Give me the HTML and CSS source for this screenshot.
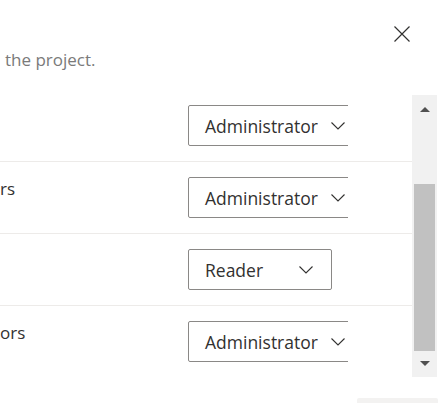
FILE: index.html
```html
<!DOCTYPE html>
<html lang="en">
<head>
<meta charset="utf-8">
<title>Manage roles</title>
<link rel="stylesheet" href="styles.css">
</head>
<body>
<div class="panel">
  <div class="header">
    <p class="desc">the project.</p>
    <button class="close" aria-label="Close">
      <svg width="16" height="16" viewBox="0 0 16 16"><path d="M0.5 0.5 L15.5 15.5 M15.5 0.5 L0.5 15.5" stroke="#323130" stroke-width="1.2" fill="none"/></svg>
    </button>
  </div>
  <div class="listarea">
    <div class="viewport">
      <div class="list">
        <div class="row">
          <div class="label"></div>
          <div class="ddwrap"><div class="dd wide"><span class="ddtext">Administrator</span><svg class="chev" width="14" height="8" viewBox="0 0 14 8"><path d="M0.5 0.5 L7 7 L13.5 0.5" stroke="#323130" stroke-width="1.1" fill="none"/></svg></div></div>
        </div>
        <div class="row">
          <div class="label">rs</div>
          <div class="ddwrap"><div class="dd wide"><span class="ddtext">Administrator</span><svg class="chev" width="14" height="8" viewBox="0 0 14 8"><path d="M0.5 0.5 L7 7 L13.5 0.5" stroke="#323130" stroke-width="1.1" fill="none"/></svg></div></div>
        </div>
        <div class="row">
          <div class="label"></div>
          <div class="ddwrap"><div class="dd"><span class="ddtext">Reader</span><svg class="chev" width="14" height="8" viewBox="0 0 14 8"><path d="M0.5 0.5 L7 7 L13.5 0.5" stroke="#323130" stroke-width="1.1" fill="none"/></svg></div></div>
        </div>
        <div class="row">
          <div class="label">ors</div>
          <div class="ddwrap"><div class="dd wide"><span class="ddtext">Administrator</span><svg class="chev" width="14" height="8" viewBox="0 0 14 8"><path d="M0.5 0.5 L7 7 L13.5 0.5" stroke="#323130" stroke-width="1.1" fill="none"/></svg></div></div>
        </div>
      </div>
    </div>
    <div class="scrollbar">
      <div class="arrow up"></div>
      <div class="thumbspace"><div class="thumb"></div></div>
      <div class="arrow down"></div>
    </div>
  </div>
  <div class="footer"><div class="footbtn"></div></div>
</div>
</body>
</html>
```
FILE: styles.css
```css
html, body {
  margin: 0;
  padding: 0;
  background: #ffffff;
}
body {
  width: 448px;
  height: 403px;
  overflow: hidden;
  font-family: "Open Sans", "Noto Sans", sans-serif;
  color: #323130;
}
.panel {
  display: flex;
  flex-direction: column;
  height: 403px;
}
.header {
  height: 95px;
  display: flex;
  align-items: flex-start;
  justify-content: space-between;
}
.desc {
  margin: 49px 0 0 5px;
  font-size: 17px;
  line-height: 22px;
  color: #7a7a7a;
}
.close {
  margin: 26px 38px 0 0;
  padding: 0;
  width: 16px;
  height: 16px;
  border: none;
  background: transparent;
  display: flex;
}
.listarea {
  display: flex;
  height: 282px;
}
.viewport {
  width: 412px;
  overflow: hidden;
}
.list {
  margin-top: -5px;
}
.row {
  display: flex;
  padding: 15px 0;
  border-bottom: 1px solid #edebe9;
}
.label {
  width: 188px;
  padding-top: 1px;
  font-size: 17px;
  line-height: 22px;
  color: #323130;
}
.ddwrap {
  width: 160px;
  overflow: hidden;
}
.dd {
  box-sizing: border-box;
  height: 41px;
  width: 144px;
  border: 1px solid #8a8886;
  border-radius: 2px;
  display: flex;
  align-items: center;
  padding: 0 18px 0 16px;
}
.dd.wide {
  width: 176px;
}
.ddtext {
  flex: 1;
  font-size: 17.5px;
  line-height: 22px;
  color: #323130;
  white-space: nowrap;
}
.chev {
  flex: none;
  margin-left: 8px;
}
.scrollbar {
  width: 25px;
  background: #f1f1f1;
  display: flex;
  flex-direction: column;
}
.arrow {
  height: 17px;
  display: flex;
  align-items: center;
  justify-content: center;
}
.arrow.up::before {
  content: "";
  border-left: 5.5px solid transparent;
  border-right: 5.5px solid transparent;
  border-bottom: 5px solid #505050;
  margin-top: 11px;
}
.arrow.down::before {
  content: "";
  border-left: 5.5px solid transparent;
  border-right: 5.5px solid transparent;
  border-top: 5px solid #505050;
  margin-bottom: 11px;
}
.thumbspace {
  flex: 1;
  padding: 72px 2px 9px;
}
.thumb {
  height: 167px;
  background: #c1c1c1;
}
.footer {
  flex: 1;
  display: flex;
  justify-content: flex-end;
  align-items: flex-end;
  padding-right: 10px;
}
.footbtn {
  width: 81px;
  height: 5px;
  background: #f3f2f1;
  border-radius: 2px 2px 0 0;
}
```
